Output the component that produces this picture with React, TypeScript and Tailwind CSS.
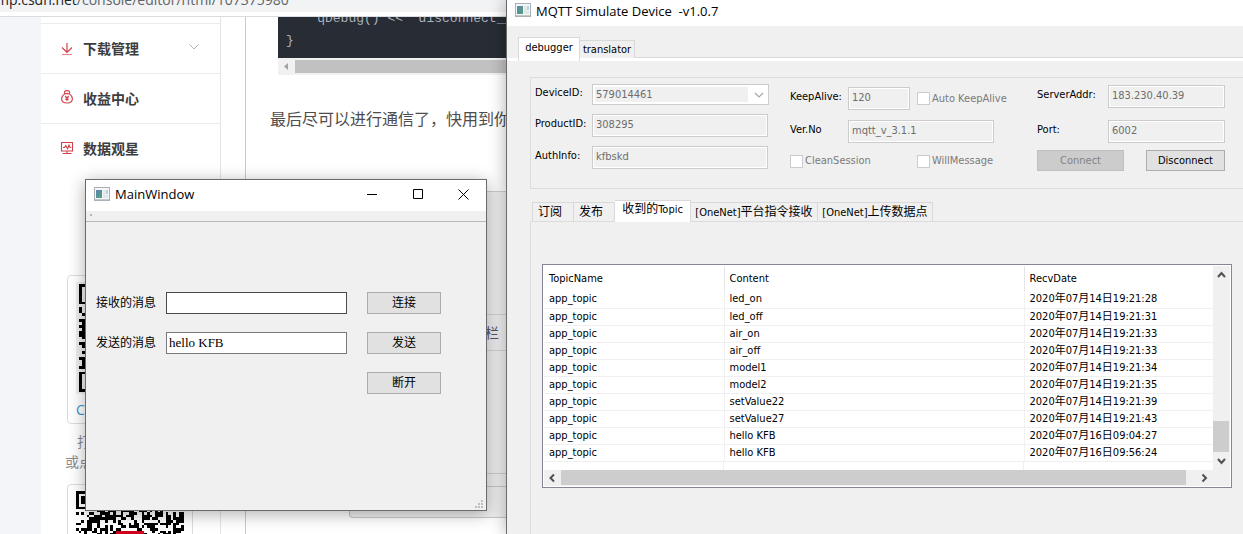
import type { ReactNode } from "react";

const tahoma = "font-['DejaVu_Sans_Condensed','DejaVu_Sans','Noto_Sans_CJK_SC',sans-serif]";
const yahei = "font-['Open_Sans','Noto_Sans_CJK_SC',sans-serif]";

const rows = [
  { content: "led_on", date: "2020年07月14日19:21:28" },
  { content: "led_off", date: "2020年07月14日19:21:31" },
  { content: "air_on", date: "2020年07月14日19:21:33" },
  { content: "air_off", date: "2020年07月14日19:21:33" },
  { content: "model1", date: "2020年07月14日19:21:34" },
  { content: "model2", date: "2020年07月14日19:21:35" },
  { content: "setValue22", date: "2020年07月14日19:21:39" },
  { content: "setValue27", date: "2020年07月14日19:21:43" },
  { content: "hello KFB", date: "2020年07月16日09:04:27" },
  { content: "hello KFB", date: "2020年07月16日09:56:24" },
];

function AppIcon() {
  return (
    <svg width="16" height="14" viewBox="0 0 16 14" className="shrink-0">
      <defs>
        <linearGradient id="pane" x1="0" y1="0" x2="1" y2="1">
          <stop offset="0" stopColor="#5b86b0" />
          <stop offset="1" stopColor="#4fa37c" />
        </linearGradient>
      </defs>
      <rect x="0.5" y="0.5" width="15" height="13" fill="#f4f6f8" stroke="#a9b0b6" />
      <rect x="1" y="12" width="14" height="1" fill="#c3c8cc" />
      <rect x="2" y="3" width="6" height="8" fill="url(#pane)" />
      <rect x="9" y="3" width="3" height="8" fill="#e3eae6" />
      <rect x="12" y="3" width="2" height="4" fill="#b9d3e3" />
      <rect x="12" y="8" width="2" height="3" fill="#dce6ea" />
    </svg>
  );
}

function QrCode({ seed, size, logo }: { seed: number; size: number; logo?: boolean }) {
  const cells: ReactNode[] = [];
  let s = seed;
  for (let y = 0; y < size; y++) {
    for (let x = 0; x < size; x++) {
      s = (s * 1103515245 + 12345) % 2147483648;
      const inFinder = (x < 8 && y < 8) || (x > size - 9 && y < 8) || (x < 8 && y > size - 9);
      if (!inFinder && (s >> 16) % 2 === 0) {
        cells.push(<rect key={`${x}-${y}`} x={x} y={y} width="1" height="1" />);
      }
    }
  }
  const finders = [
    [0, 0],
    [size - 7, 0],
    [0, size - 7],
  ];
  return (
    <svg width="108" height="108" viewBox={`0 0 ${size} ${size}`} shapeRendering="crispEdges" className="block">
      {cells}
      {finders.map(([x, y]) => (
        <g key={`${x}-${y}`}>
          <rect x={x + 0.5} y={y + 0.5} width="6" height="6" fill="none" stroke="#000" />
          <rect x={x + 2} y={y + 2} width="3" height="3" />
        </g>
      ))}
      {logo && <rect x={size / 2 - 5.5} y={size / 2 - 5.5} width="11" height="11" rx="1" fill="#d0021b" />}
    </svg>
  );
}

function DownloadIcon() {
  return (
    <svg width="14" height="14" viewBox="0 0 14 14" fill="none" stroke="#d2414b" strokeWidth="1.2">
      <path d="M7 1v9M2 5.5l5 5 5-5" />
      <path d="M2 12.5h10" stroke="#e28a90" />
    </svg>
  );
}

function MoneyIcon() {
  return (
    <svg width="14" height="14" viewBox="0 0 14 14" fill="none" stroke="#d2414b" strokeWidth="1.1" className="mb-1">
      <path d="M5 3.8C3.6 2 4.6.6 7 .6s3.400 1.400 2 3.200" />
      <path d="M5 3.600h4c2 1.200 3.400 3 3.400 5.200 0 2.800-1.600 4.200-5.400 4.200S1.600 11.600 1.600 8.800C1.600 6.600 3 4.800 5 3.600z" />
      <path d="M5.200 5.800L7 7.800l1.800-2M5.200 8h3.600M5.400 9.500h3.200M7 7.800v3.200" />
    </svg>
  );
}

function ChartIcon() {
  return (
    <svg width="14" height="14" viewBox="0 0 14 14" fill="none" stroke="#d2414b" strokeWidth="1.1" className="mb-[2px]">
      <path d="M1.500 1.500h11v8.500h-11z" />
      <path d="M3 6.500h1.500l1.300-2 1.700 3.200L9 4l1 2.500h1.200" />
      <path d="M7 10v2.500M2.500 12.500h9" />
    </svg>
  );
}

const menu = [
  { label: "下载管理", icon: <DownloadIcon />, open: true },
  { label: "收益中心", icon: <MoneyIcon /> },
  { label: "数据观星", icon: <ChartIcon /> },
];

function BrowserPage() {
  return (
    <div className={`flex h-full flex-col bg-white ${yahei}`}>
      {/* Address bar */}
      <div className="flex h-3 shrink-0 items-end overflow-hidden bg-[#f1f3f4] pb-[4px]">
        <div className="-ml-1 text-[14px] leading-4 whitespace-nowrap text-[#5f6368]">
          <span className="text-[#202124]">mp.csdn.net</span>/console/editor/html/107375980
        </div>
      </div>
      <div className="h-[5px] shrink-0 border-b border-[#dadce0]" />

      <div className="flex min-h-0 flex-1 overflow-hidden">
        <div className="w-[41px] shrink-0 bg-[#f4f5f8]" />

        {/* Sidebar */}
        <nav className="w-[180px] shrink-0 border-r border-[#e4e4e4] pt-[6px]">
          {menu.map((item) => (
            <a key={item.label} href="#" className="flex h-[50px] items-center border-t border-[#ebebeb] pt-px pr-5 pl-[19px]">
              {item.icon}
              <span className="ml-[9px] flex-1 text-[14px] leading-5 font-bold text-[#3d3d3d]">{item.label}</span>
              {item.open && (
                <svg width="12" height="8" viewBox="0 0 12 8" fill="none" stroke="#b0b4b8" className="mb-1">
                  <path d="M1.500 1.500L6 6l4.500-4.500" />
                </svg>
              )}
            </a>
          ))}

          <div className="mt-[102px] ml-[26px] h-[149px] w-[126px] rounded border border-[#dcdcdc] px-2 pt-[6px]">
            <div className="bg-[#eeeeee] py-[2px] pl-[3px]">
              <QrCode seed={17} size={37} />
            </div>
            <a href="#" className="mt-1 block text-[14px] leading-6 text-[#3d94d1]">C</a>
          </div>
          <div className="mt-2 pl-6 text-[14px] leading-5 text-[#8c8c8c]">
            <p className="pl-3">打</p>
            <p>或点</p>
          </div>
          <div className="mt-[12px] ml-[26px] w-[126px] rounded border border-[#dcdcdc] px-2 py-[6px]">
            <QrCode seed={91} size={41} logo />
          </div>
        </nav>

        {/* Article preview */}
        <article className="ml-6 flex-1 overflow-hidden border-l border-[#c9c9c9] whitespace-nowrap">
          <div className="ml-8">
            <pre className="flex h-[41px] flex-col justify-end overflow-hidden bg-[#282c34] pb-[6px] pl-2 font-['Liberation_Mono',monospace] text-[13px] leading-[22px] text-[#abb2bf]">
              {'    qDebug() << "disconnect__\n}'}
            </pre>
            <div className="flex h-[17px] items-center bg-[#f1f1f1]">
              <svg width="17" height="17" viewBox="0 0 17 17" fill="#a3a3a3">
                <path d="M10 5v7L6 8.500z" />
              </svg>
              <div className="h-[13px] flex-1 bg-[#c1c1c1]" />
            </div>
          </div>
          <p className="mt-8 ml-6 text-[16px] leading-6 text-[#4d4d4d]">最后尽可以进行通信了，快用到你</p>
          <div className="mt-[60px] ml-[103px] border-y border-l border-[#cfcfcf] bg-[#f0f0f0]">
            <div className="h-[122px]" />
            <div className="flex h-[37px] items-center border-y border-[#d5d5de] pl-[135px] text-[14px] text-[#55556a]">
              栏
            </div>
            <div className="h-[122px]" />
          </div>
          <div className="ml-[103px] h-3 bg-[#f0f0f0]" />
          <div className="ml-[103px] h-8 rounded-bl border-y border-l border-[#c6c6c6] bg-[#f0f0f0]" />
        </article>
      </div>
    </div>
  );
}

function MainWindow() {
  const button = "h-[22px] w-[74px] border border-[#adadad] bg-[#e1e1e1] text-[12px] leading-4";
  return (
    <section
      className={`absolute top-[179px] left-[85px] flex h-[332px] w-[402px] flex-col border border-[#6b6b6b] bg-[#f0f0f0] shadow-[0_3px_16px_rgba(0,0,0,0.32)] ${yahei}`}
    >
      <header className="flex h-[31px] shrink-0 items-center bg-white pb-[3px] pl-2">
        <AppIcon />
        <h2 className="ml-[5px] flex-1 text-[13px] leading-4">MainWindow</h2>
        <button aria-label="Minimize" className="flex h-full w-[46px] items-center justify-center">
          <svg width="10" height="10" viewBox="0 0 10 10" stroke="#000"><path d="M0 5.500h10" /></svg>
        </button>
        <button aria-label="Maximize" className="flex h-full w-[45px] items-center justify-center">
          <svg width="10" height="10" viewBox="0 0 10 10" stroke="#000" fill="none"><path d="M.5.5h9v9h-9z" /></svg>
        </button>
        <button aria-label="Close" className="flex h-full w-[46px] items-center justify-center">
          <svg width="11" height="11" viewBox="0 0 11 11" stroke="#000"><path d="M.5.5l10 10M10.500.5l-10 10" /></svg>
        </button>
      </header>
      <div className="h-[11px] shrink-0 border-b border-[#b9b9b9] pt-[3px] pl-1">
        <div className="size-[2px] bg-[#b5b5b5]" />
      </div>

      <form className="grid grid-cols-[70px_181px_94px] items-center gap-y-[18px] pt-[70px] pl-[10px] text-[12px] leading-4">
        <label htmlFor="recv" className="whitespace-nowrap">接收的消息</label>
        <input id="recv" className="h-[22px] w-full border border-[#4a4a4a] bg-white px-[2px]" />
        <button type="button" className={`ml-5 ${button}`}>连接</button>
        <label htmlFor="send" className="whitespace-nowrap">发送的消息</label>
        <input
          id="send"
          defaultValue="hello KFB"
          className="h-[22px] w-full border border-[#7a7a7a] bg-white px-[2px] font-['Liberation_Serif',serif] text-[13px]"
        />
        <button type="button" className={`ml-5 ${button}`}>发送</button>
        <button type="button" className={`col-start-3 ml-5 ${button}`}>断开</button>
      </form>

      <div className="mt-auto flex justify-end pr-[3px] pb-[2px]">
        <svg width="8" height="8" viewBox="0 0 8 8" fill="#bfbfbf">
          <path d="M6 0h2v2H6zM6 3h2v2H6zM3 3h2v2H3zM6 6h2v2H6zM3 6h2v2H3zM0 6h2v2H0z" />
        </svg>
      </div>
    </section>
  );
}

function Field({ id, label, value, labelWidth, width }: { id: string; label: string; value: string; labelWidth: string; width: string }) {
  return (
    <div className="flex items-center">
      <label htmlFor={id} className={`pb-1 whitespace-nowrap ${labelWidth}`}>{label}</label>
      <input
        id={id}
        disabled
        defaultValue={value}
        className={`h-[23px] border border-[#cccccc] bg-[#f0f0f0] px-[3px] pb-[2px] text-[#6d6d6d] shadow-[inset_0_0_0_1px_#fff] ${width}`}
      />
    </div>
  );
}

function Check({ label }: { label: string }) {
  return (
    <label className="flex items-center gap-[2px] whitespace-nowrap text-[#7a7a7a]">
      <input type="checkbox" disabled className="size-[13px] shrink-0 appearance-none border border-[#cccccc] bg-white" />
      {label}
    </label>
  );
}

function DeviceForm() {
  return (
    <form className="mt-4 ml-[23px] flex h-[112px] items-start border-y border-l border-[#dcdcdc] pl-1">
      <div className="flex w-[255px] shrink-0 flex-col gap-[9px] pt-[6px]">
        <div className="flex items-center">
          <label htmlFor="device" className="w-[57px] pb-1">DeviceID:</label>
          <div className="flex h-[21px] w-[177px] items-center border border-[#cccccc] bg-white p-[2px]">
            <select id="device" disabled className="h-[15px] flex-1 appearance-none bg-[#f0f0f0] pl-px leading-[15px] text-[#6d6d6d]">
              <option>579014461</option>
            </select>
            <svg width="18" height="8" viewBox="0 0 18 8" fill="none" stroke="#a8a8a8" strokeWidth="1.2">
              <path d="M7 2l4 4 4-4" />
            </svg>
          </div>
        </div>
        <Field id="product" label="ProductID:" value="308295" labelWidth="w-[57px]" width="w-[176px]" />
        <Field id="auth" label="AuthInfo:" value="kfbskd" labelWidth="w-[57px]" width="w-[176px]" />
      </div>

      <div className="flex w-[247px] shrink-0 flex-col gap-[10px] pt-[9px]">
        <div className="flex items-center gap-[7px]">
          <Field id="keep" label="KeepAlive:" value="120" labelWidth="w-[58px]" width="w-[62px]" />
          <Check label="Auto KeepAlive" />
        </div>
        <Field id="version" label="Ver.No" value="mqtt_v_3.1.1" labelWidth="w-[58px]" width="w-[146px]" />
        <div className="grid grid-cols-[127px_1fr]">
          <Check label="CleanSession" />
          <Check label="WillMessage" />
        </div>
      </div>

      <div className="flex w-[188px] shrink-0 flex-col pt-[7px]">
        <Field id="server" label="ServerAddr:" value="183.230.40.39" labelWidth="w-[71px]" width="w-[117px]" />
        <div className="mt-3">
          <Field id="port" label="Port:" value="6002" labelWidth="w-[71px]" width="w-[117px]" />
        </div>
        <div className="mt-[7px] flex justify-between">
          <button type="button" disabled className="h-[21px] w-[87px] border border-[#bfbfbf] bg-[#cccccc] text-[#838383]">Connect</button>
          <button type="button" className="h-[21px] w-[79px] border border-[#adadad] bg-[#e1e1e1]">Disconnect</button>
        </div>
      </div>
    </form>
  );
}

function Arrow({ d }: { d: string }) {
  return (
    <svg width="17" height="16" viewBox="0 0 17 16" fill="none" stroke="#505050" strokeWidth="2" className="shrink-0">
      <path d={d} />
    </svg>
  );
}

function TopicList() {
  return (
    <div className="mr-[11px] ml-[11px] flex flex-col border border-[#828790] bg-white p-px">
      <div className="flex h-[204px]">
        <div className="flex flex-1 flex-col">
          <table className="w-full table-fixed text-left">
            <colgroup>
              <col className="w-[180px]" />
              <col className="w-[300px]" />
              <col />
            </colgroup>
            <thead>
              <tr className="h-[25px]">
                <th className="border-r border-[#e5e5e5] pl-[5px] font-normal">TopicName</th>
                <th className="border-r border-[#e5e5e5] pl-[5px] font-normal">Content</th>
                <th className="pl-[5px] font-normal">RecvDate</th>
              </tr>
            </thead>
            <tbody>
              {rows.map((row) => (
                <tr key={row.date + row.content} className="h-[17px] border-b border-[#f0f0f0] leading-4">
                  <td className="border-r border-[#f0f0f0] pl-[5px]">app_topic</td>
                  <td className="border-r border-[#f0f0f0] pl-[5px]">{row.content}</td>
                  <td className="overflow-hidden pl-[5px] whitespace-nowrap">{row.date}</td>
                </tr>
              ))}
            </tbody>
          </table>
          <div className="grid flex-1 grid-cols-[180px_300px_1fr]">
            <div className="border-r border-[#f0f0f0]" />
            <div className="border-r border-[#f0f0f0]" />
          </div>
        </div>
        <div className="flex w-[17px] flex-col bg-[#f0f0f0] pb-[2px]">
          <Arrow d="M5 11l3.500-4L12 11" />
          <div className="mt-auto mr-px h-[31px] bg-[#cdcdcd]" />
          <Arrow d="M5 7l3.500 4L12 7" />
        </div>
      </div>
      <div className="flex h-4 bg-[#f0f0f0]">
        <Arrow d="M10 4.500L6.500 8l3.500 3.500" />
        <div className="mr-[10px] h-[15px] flex-1 bg-[#cdcdcd]" />
        <Arrow d="M6.500 4.500L10 8l-3.500 3.500" />
        <div className="w-[17px]" />
      </div>
    </div>
  );
}

function SimulatorWindow() {
  const tab = "border-t border-r border-[#d9d9d9] whitespace-nowrap";
  return (
    <section
      className={`absolute inset-y-0 right-0 left-[506px] overflow-hidden border-l border-[#6b6b6b] bg-[#f0f0f0] text-[11px] leading-4 text-black shadow-[0_0_16px_rgba(0,0,0,0.32)] ${tahoma}`}
    >
      <header className="flex h-[26px] items-start bg-white pt-[3px] pl-2">
        <AppIcon />
        <h1 className={`ml-[5px] text-[13px] leading-4 whitespace-pre ${yahei}`}>MQTT Simulate Device  -v1.0.7</h1>
      </header>

      {/* Window tabs */}
      <div className="mt-[11px] flex items-end border-b-[3px] border-white pl-[11px]">
        <button className={`-mb-[3px] h-6 w-[62px] border-l bg-white pb-1 ${tab}`}>debugger</button>
        <button className={`h-[18px] w-[55px] ${tab}`}>translator</button>
        <div className="flex-1 self-end border-b border-[#d9d9d9]" />
      </div>

      <DeviceForm />

      {/* Topic tabs */}
      <div className="mt-[11px] flex items-end pl-[25px] text-[12px]">
        <button className={`h-[19px] w-[42px] border-l pr-[6px] ${tab}`}>订阅</button>
        <button className={`h-[19px] w-[41px] pr-[6px] ${tab}`}>发布</button>
        <button className={`z-10 -mb-px h-[22px] w-[76px] bg-white pb-1 ${tab}`}>
          收到的<span className="text-[11px]">Topic</span>
        </button>
        <button className={`h-[19px] w-[127px] ${tab}`}>
          <span className="text-[11px]">[OneNet]</span>平台指令接收
        </button>
        <button className={`h-[19px] w-[115px] ${tab}`}>
          <span className="text-[11px]">[OneNet]</span>上传数据点
        </button>
      </div>
      <div className="ml-[23px] h-full border-t border-l border-[#dcdcdc] pt-[42px]">
        <TopicList />
      </div>
    </section>
  );
}

export default function App() {
  return (
    <main className="relative h-screen overflow-hidden bg-white">
      <BrowserPage />
      <MainWindow />
      <SimulatorWindow />
    </main>
  );
}
